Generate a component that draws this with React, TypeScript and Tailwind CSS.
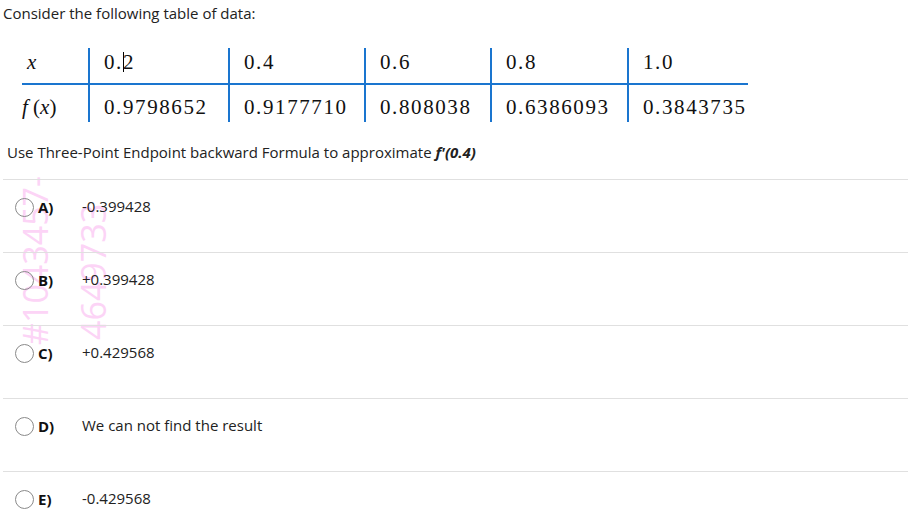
import React from 'react';

const xs = ['0.2', '0.4', '0.6', '0.8', '1.0'];
const fx = ['0.9798652', '0.9177710', '0.808038', '0.6386093', '0.3843735'];
const colW = ['w-[140px]', 'w-[136px]', 'w-[126px]', 'w-[137px]', 'w-[121px]'];

const options = [
  { key: 'A)', text: '-0.399428' },
  { key: 'B)', text: '+0.399428' },
  { key: 'C)', text: '+0.429568' },
  { key: 'D)', text: 'We can not find the result' },
  { key: 'E)', text: '-0.429568' },
];

const serif = { fontFamily: '"Liberation Serif", "Times New Roman", serif' };

const Radio: React.FC = () => (
  <span className="w-[19px] h-[19px] rounded-full border border-[#8a8a8a] shrink-0" />
);

export default function App() {
  return (
    <div
      className="relative w-[908px] h-[529px] overflow-hidden bg-white text-[#222] text-[15px]"
      style={{ fontFamily: '"Open Sans", "Noto Sans", sans-serif' }}
    >
      {/* watermark, behind content */}
      <div className="pointer-events-none absolute inset-0 text-[#fcd4f6] text-[34px] leading-none">
        <div className="absolute left-[18px] top-[345px] origin-top-left -rotate-90 whitespace-nowrap">#1043457-</div>
        <div className="absolute left-[76px] top-[340px] origin-top-left -rotate-90 whitespace-nowrap">4649733</div>
      </div>

      <div className="relative">
        <div className="pl-[3px] pt-[3px] leading-[20px]">Consider the following table of data:</div>

        {/* data table */}
        <div className="ml-[22px] mt-[25px] w-[726px] text-[21px] tracking-[1.6px] text-[#111]" style={serif}>
          <div className="flex h-[37px] border-b-2 border-[#1a75cf] leading-[24px]">
            <div className="w-[66px] pl-[5px] pt-[2px]">
              <i style={serif}>x</i>
            </div>
            {xs.map((v, i) => (
              <div key={v} className={`${colW[i]} border-l-2 border-[#1a75cf] pl-[14px] pt-[2px]`}>
                {i === 0 ? (
                  <span>
                    0.<span className="inline-block w-px h-[20px] bg-black align-[-3px] -mr-px" />2
                  </span>
                ) : (
                  v
                )}
              </div>
            ))}
          </div>
          <div className="flex h-[37px] leading-[24px]">
            <div className="w-[66px] pt-[10px] tracking-normal">
              <i style={serif}>f</i> (<i style={serif}>x</i>)
            </div>
            {fx.map((v, i) => (
              <div key={v} className={`${colW[i]} border-l-2 border-[#1a75cf] pl-[14px] pt-[10px]`}>
                {v}
              </div>
            ))}
          </div>
        </div>

        <div className="pl-[7px] mt-[20px] leading-[20px]">
          Use Three-Point Endpoint backward Formula to approximate{' '}
          <b className="italic">f'(0.4)</b>
        </div>

        <div className="mt-[17px] ml-[3px]">
          {options.map(o => (
            <div key={o.key} className="h-[73px] border-t border-[#e0e0e0] flex items-start pt-[16px]">
              <div className="flex items-center gap-[4px] pl-[12px] w-[79px] shrink-0">
                <Radio />
                <b className="text-[#111]">{o.key}</b>
              </div>
              <span className="leading-[20px]">{o.text}</span>
            </div>
          ))}
        </div>
      </div>
    </div>
  );
}
